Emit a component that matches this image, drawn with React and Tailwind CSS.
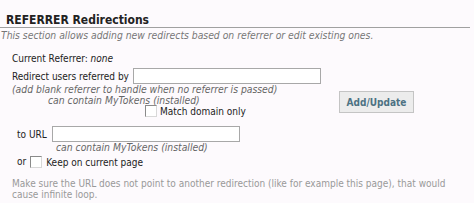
import React from 'react';

const Box = () => (
  <span className="inline-block w-[12px] h-[12px] border border-[#8a8a8a] border-r-[#d8d8d8] border-b-[#d8d8d8] bg-white shrink-0" />
);

const App = () => {
  return (
    <div className="w-[474px] h-[203px] bg-[#fdfafd] text-[#222] overflow-hidden font-['DejaVu_Sans_Condensed','DejaVu_Sans',sans-serif] font-stretch-condensed text-[10px] leading-[11px]">
      {/* header */}
      <div className="pt-[14px] w-[470px] border-b border-[#a0a0a0]">
        <h2 className="pl-[6px] text-[12px] leading-[13px] font-bold text-[#222]">REFERRER Redirections</h2>
      </div>
      <p className="pl-[1px] pt-[2px] italic text-[#777] text-[10.3px]">
        This section allows adding new redirects based on referrer or edit existing ones.
      </p>

      <div className="pl-[12px] pt-[12px]">
        <div>
          Current Referrer: <i>none</i>
        </div>

        <div className="flex mt-[4px]">
          <div className="w-[320px]">
            <div className="flex items-center gap-[4px]">
              <span>Redirect users referred by</span>
              <span className="block w-[188px] h-[16px] border border-[#a8a8a8] bg-white" />
            </div>
            <div className="italic text-[#666] text-[10.3px] leading-[11px]">
              (add blank referrer to handle when no referrer is passed)
            </div>
            <div className="italic text-[#666] text-[10.3px] leading-[10px] pl-[36px]">can contain MyTokens (installed)</div>
            <div className="flex items-center gap-[3px] pl-[133px] -mt-[1px]">
              <Box />
              <span className="pt-[2px]">Match domain only</span>
            </div>
          </div>
          <div className="pl-[7px] pt-[23px]">
            <button className="w-[75px] h-[22px] bg-[#ececec] border border-[#c4c4c4] text-[#4d7283] font-bold text-[10px]">
              Add/Update
            </button>
          </div>
        </div>

        <div className="pl-[5px] mt-[9px]">
          <div className="flex items-center gap-[5px]">
            <span>to URL</span>
            <span className="block w-[188px] h-[16px] border border-[#a8a8a8] bg-white" />
          </div>
          <div className="italic text-[#666] text-[10.3px] pl-[39px]">can contain MyTokens (installed)</div>
          <div className="flex items-center gap-[4px] mt-[2px]">
            <span>or</span>
            <Box />
            <span className="pt-[2px]">Keep on current page</span>
          </div>
        </div>

        <p className="text-[#999] mt-[10px] w-[460px]">
          Make sure the URL does not point to another redirection (like for example this page), that would cause infinite loop.
        </p>
      </div>
    </div>
  );
};

export default App;
